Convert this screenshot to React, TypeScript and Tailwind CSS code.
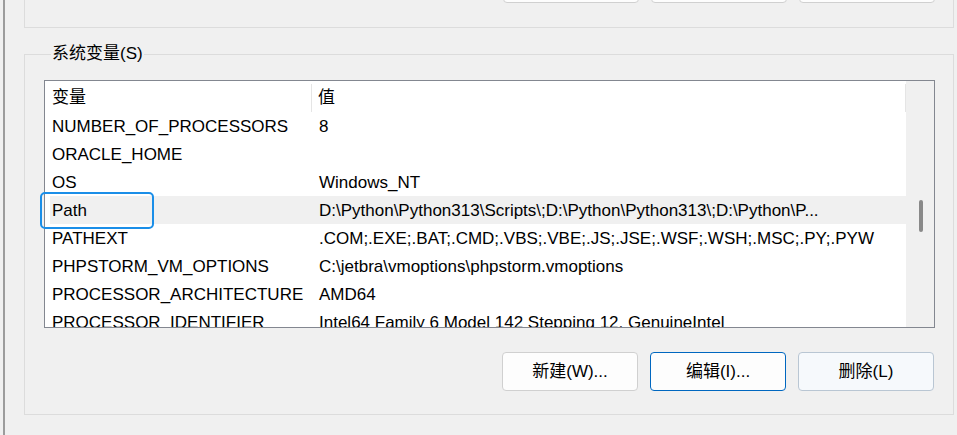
import React from 'react';

const FONT = { fontFamily: '"Liberation Sans", "Noto Sans CJK SC", sans-serif' };

const rows: [string, string][] = [
  ['NUMBER_OF_PROCESSORS', '8'],
  ['ORACLE_HOME', ''],
  ['OS', 'Windows_NT'],
  ['Path', 'D:\\Python\\Python313\\Scripts\\;D:\\Python\\Python313\\;D:\\Python\\P...'],
  ['PATHEXT', '.COM;.EXE;.BAT;.CMD;.VBS;.VBE;.JS;.JSE;.WSF;.WSH;.MSC;.PY;.PYW'],
  ['PHPSTORM_VM_OPTIONS', 'C:\\jetbra\\vmoptions\\phpstorm.vmoptions'],
  ['PROCESSOR_ARCHITECTURE', 'AMD64'],
  ['PROCESSOR_IDENTIFIER', 'Intel64 Family 6 Model 142 Stepping 12, GenuineIntel'],
];

const Btn = ({ label, variant }: { label?: string; variant?: 'focus' | 'hover' }) => {
  const tone =
    variant === 'focus'
      ? 'bg-[#fdfdfd] border-[#0067c0]'
      : variant === 'hover'
      ? 'bg-[#f6f9fc] border-[#b9c6d3]'
      : 'bg-[#fdfdfd] border-[#d0d0d0]';
  return (
    <div
      className={`w-[136px] h-[39px] shrink-0 rounded-[4px] border flex items-center justify-center text-[17px] text-black ${tone}`}
    >
      {label}
    </div>
  );
};

export default function App() {
  return (
    <div className="w-[957px] h-[435px] bg-[#f0f0f0] overflow-hidden flex" style={FONT}>
      <div className="w-[3px] shrink-0" />
      <div className="w-[2px] shrink-0 bg-[#9c9c9c]" />
      <div className="w-[949px] shrink-0 pl-[19px] flex flex-col">
        {/* previous group, scrolled off the top; only the button bottoms show */}
        <div className="w-[930px] h-[28px] border-x border-b border-[#dcdcdc]">
          <div className="h-[3px] overflow-hidden flex flex-col justify-end">
            <div className="flex justify-end gap-[12px] pr-[18px]">
              <Btn />
              <Btn />
              <Btn />
            </div>
          </div>
        </div>

        <fieldset className="w-[930px] mt-[15px] border border-[#dcdcdc] pl-[19px] pr-[18px] pb-[23px] min-w-0">
          <legend className="ml-[7px] px-[1px] text-[17px] leading-[22px] text-black">系统变量(S)</legend>
          <div className="relative w-[891px] mt-[15px] h-[248px] border border-[#838790] bg-white flex">
            <div className="w-[861px] shrink-0 flex flex-col overflow-hidden">
              <div className="h-[31px] shrink-0 flex text-[17px] text-black pt-[3px]">
                <div className="w-[267px] shrink-0 pl-[7px] flex items-center border-r border-[#e5e5e5]">变量</div>
                <div className="flex-1 pl-[6px] flex items-center border-r border-[#e5e5e5]">值</div>
              </div>
              <div className="flex flex-col pl-[5px]">
                {rows.map(([name, value]) => (
                  <div
                    key={name}
                    className={`h-[28px] shrink-0 flex items-center pt-[2px] text-[17px] text-black ${name === 'Path' ? 'bg-[#f0f0f0]' : ''}`}
                  >
                    <div className="w-[262px] shrink-0 pl-[2px] whitespace-nowrap">{name}</div>
                    <div className="flex-1 min-w-0 pl-[7px] pr-[8px] whitespace-nowrap overflow-hidden text-ellipsis">
                      {value}
                    </div>
                  </div>
                ))}
              </div>
            </div>
            <div className="w-[28px] shrink-0 bg-[#f0f0f0] flex justify-center pt-[119px] pl-[1px]">
              <div className="w-[4px] h-[32px] rounded-full bg-[#898989]" />
            </div>
            {/* keyboard focus ring on the Path row */}
            <div className="absolute left-[-5px] top-[111px] w-[114px] h-[37px] rounded-[5px] border-2 border-[#1a8ee8]" />
          </div>
          <div className="mt-[24px] flex justify-end gap-[12px] pr-[1px]">
            <Btn label="新建(W)..." />
            <Btn label="编辑(I)..." variant="focus" />
            <Btn label="删除(L)" variant="hover" />
          </div>
        </fieldset>
      </div>
    </div>
  );
}
